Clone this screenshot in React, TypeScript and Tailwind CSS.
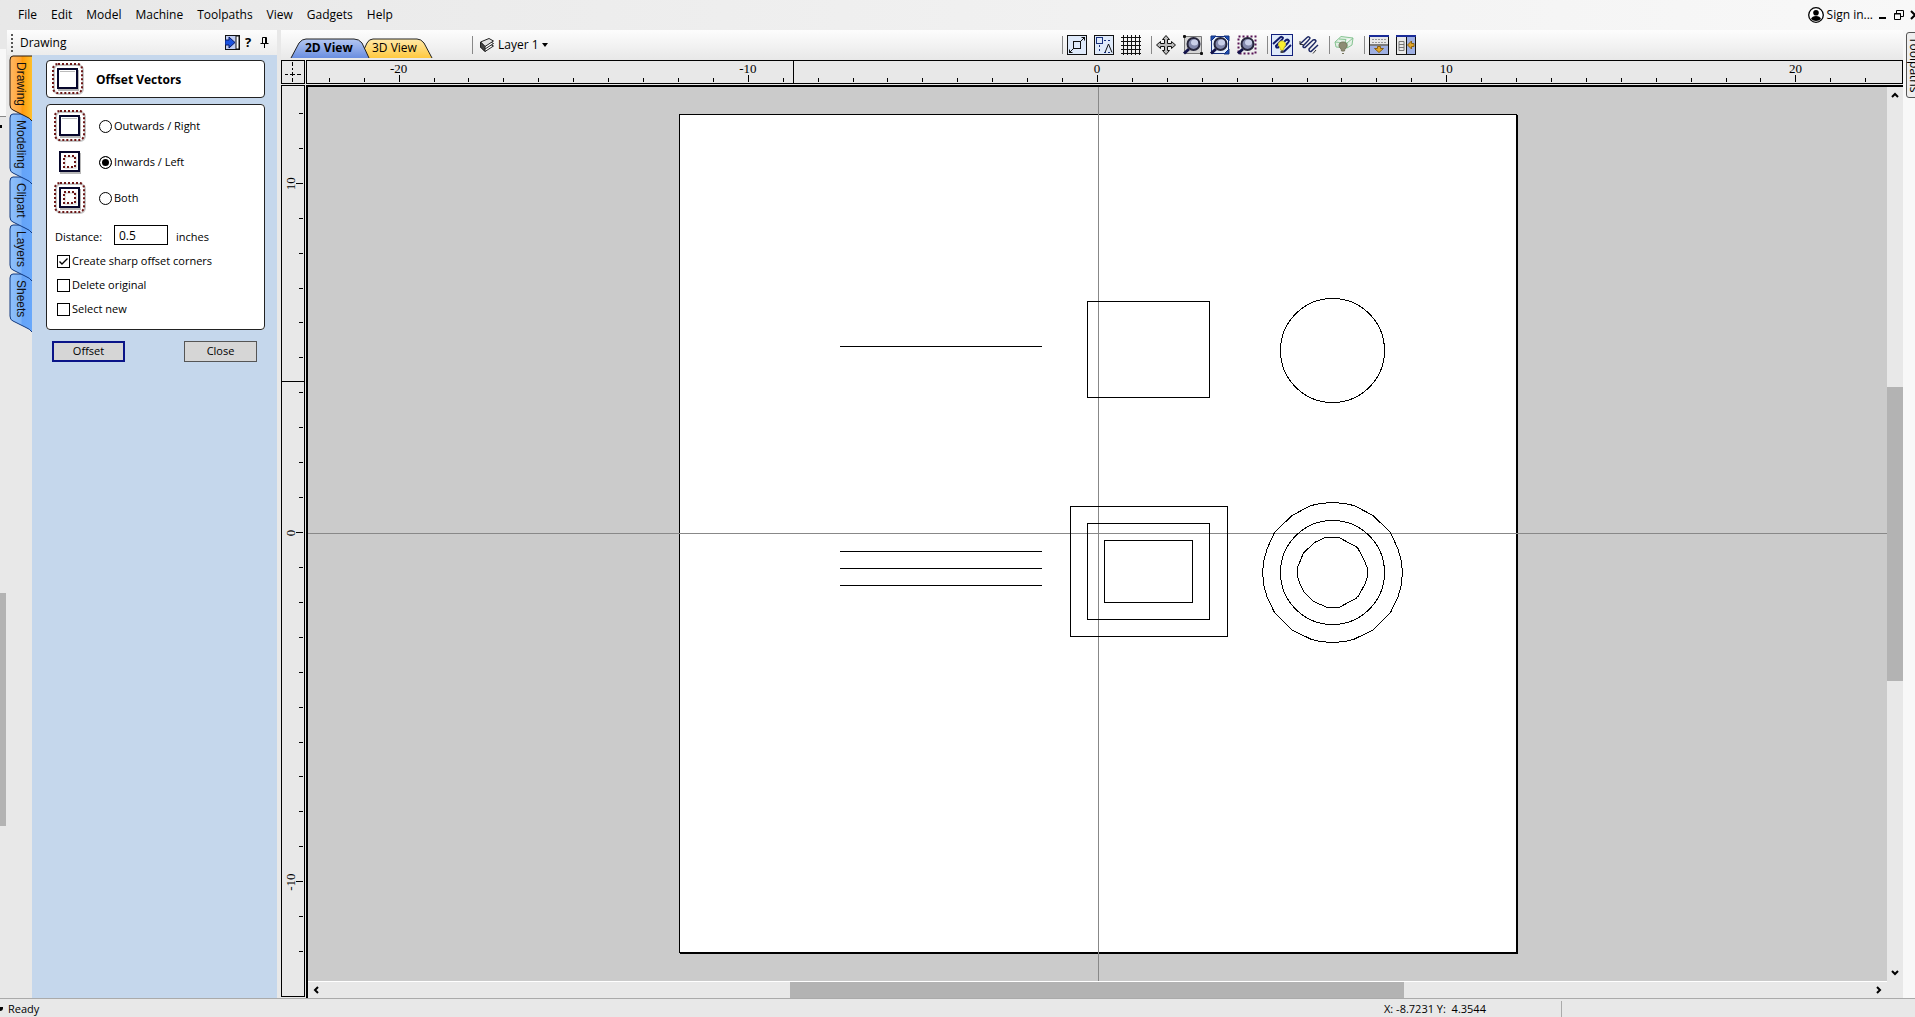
import type { ReactNode } from "react";

const menus = ["File", "Edit", "Model", "Machine", "Toolpaths", "View", "Gadgets", "Help"];

const sideTabs = [
  { label: "Drawing", y: 1, h: 57, active: true },
  { label: "Modeling", y: 59, h: 62, active: false },
  { label: "Clipart", y: 122, h: 48, active: false },
  { label: "Layers", y: 170, h: 48, active: false },
  { label: "Sheets", y: 219, h: 50, active: false },
];

const UNIT = 34.92;

const OffsetIcon = ({ outer, inner }: { outer?: boolean; inner?: boolean }) => (
  <svg width="32" height="32" viewBox="0 0 32 32" fill="none">
    {outer && (
      <>
        <rect x="2" y="2" width="29" height="29" rx="5" stroke="#c8c8c8" strokeWidth="2" />
        <rect x="1" y="1" width="29" height="29" rx="5" stroke="#6b1515" strokeWidth="2" strokeDasharray="2 2" />
      </>
    )}
    <rect x="7" y="8" width="19" height="19" stroke="#b8b8b8" strokeWidth="2" />
    <rect x="6" y="6" width="19" height="19" fill="#fff" stroke="#07072c" strokeWidth="2" />
    {inner ? (
      <>
        <rect x="11" y="11" width="11" height="11" stroke="#ccc" strokeWidth="1" />
        <rect x="10" y="10" width="11" height="11" stroke="#6b1515" strokeWidth="2" strokeDasharray="2 2" />
      </>
    ) : (
      <path d="M8 8.500H23" stroke="#bbb" />
    )}
  </svg>
);

const SideTabs = () => (
  <svg width="23" height="282" viewBox="0 0 23 282" className="block">
    <defs>
      <linearGradient id="orange">
        <stop offset="0" stopColor="#ffb764" />
        <stop offset="0.5" stopColor="#ffa431" />
        <stop offset="0.55" stopColor="#ff9a0c" />
        <stop offset="1" stopColor="#ffc02b" />
      </linearGradient>
      <linearGradient id="sky">
        <stop offset="0" stopColor="#8fc0fb" />
        <stop offset="0.5" stopColor="#7db3f8" />
        <stop offset="0.55" stopColor="#64a3f8" />
        <stop offset="1" stopColor="#68a8fb" />
      </linearGradient>
    </defs>
    {[...sideTabs].reverse().map((t) => {
      const b = t.y + t.h;
      return (
        <g key={t.label}>
          <path
            d={`M23 ${t.y}H4Q1 ${t.y} 1 ${t.y + 4}V${b - 8}Q1 ${b - 4} 4 ${b - 3}L16 ${b + 3}Q21 ${b + 5} 23 ${b + 8}`}
            fill={t.active ? "url(#orange)" : "url(#sky)"}
            stroke={t.active ? "#2a1a10" : "#12397f"}
          />
          <text
            transform={`translate(8 ${t.y + 6}) rotate(90)`}
            className="fill-[#111] font-['Liberation_Sans'] text-[12px]"
          >
            {t.label}
          </text>
        </g>
      );
    })}
  </svg>
);

const Option = ({ label, icon, checked }: { label: string; icon: ReactNode; checked?: boolean }) => (
  <label className="flex h-9 items-center">
    <span className="w-[45px]">{icon}</span>
    <input
      type="radio"
      name="direction"
      defaultChecked={checked}
      className="mr-0.5 size-[13px] appearance-none rounded-full border border-black bg-white checked:bg-black checked:shadow-[inset_0_0_0_2px_#fff]"
    />
    {label}
  </label>
);

const Check = ({ label, checked }: { label: string; checked?: boolean }) => (
  <label className="flex h-6 items-center">
    <span className="relative mr-0.5 size-[13px]">
      <input
        type="checkbox"
        defaultChecked={checked}
        className="peer block size-[13px] appearance-none border border-black bg-white"
      />
      <svg
        viewBox="0 0 13 13"
        className="pointer-events-none absolute inset-0 hidden size-[13px] peer-checked:block"
        fill="none"
        stroke="#000"
        strokeWidth="1.4"
      >
        <path d="M2.5 6.5L5 9L10.5 3.5" />
      </svg>
    </span>
    {label}
  </label>
);

const DrawingPanel = () => (
  <aside className="flex w-[270px] shrink-0 flex-col">
    <div className="flex h-[25px] items-center bg-gradient-to-b from-[#fdfdfd] to-[#ececec] pr-2 pl-1 text-[12px]">
      <span className="mr-[7px] h-[18px] border-l-2 border-dotted border-[#555]" />
      <h2 className="flex-1">Drawing</h2>
      <button aria-label="Switch side">
        <svg width="15" height="15" viewBox="0 0 15 15">
          <rect x="0.5" y="0.5" width="14" height="14" fill="#c0cdf2" stroke="#111" />
          <path d="M11 1H14V14H11Z" fill="#fff" stroke="#111" />
          <path d="M0 5H4V2L10 7.500L4 13V10H0Z" fill="#1c53e0" stroke="#081a66" />
        </svg>
      </button>
      <button aria-label="Help" className="w-4 text-[13px] font-bold">
        ?
      </button>
      <button aria-label="Pin" className="ml-1">
        <svg width="9" height="11" viewBox="0 0 9 11" fill="none" stroke="#000">
          <path d="M2.500 6V0.500H6.500V6M5.500 1V6M0.500 6.500H8.500M4.500 7V11" />
        </svg>
      </button>
    </div>
    <div className="flex flex-1">
      <div className="w-[25px] pl-[2px]">
        <SideTabs />
      </div>
      <form className="flex-1 bg-[#c5d7ec] pt-[5px] pr-3 pl-[14px] text-[11px]">
        <div className="flex h-[38px] items-center rounded-[4px] border border-[#222] bg-white pl-[5px]">
          <OffsetIcon outer />
          <h1 className="ml-3 pt-0.5 text-[12px] font-bold">Offset Vectors</h1>
        </div>
        <fieldset className="mt-1.5 h-[226px] rounded-[4px] border border-[#222] bg-white pt-[3px] pl-[7px]">
          <Option label="Outwards / Right" icon={<OffsetIcon outer />} />
          <Option label="Inwards / Left" icon={<OffsetIcon inner />} checked />
          <Option label="Both" icon={<OffsetIcon outer inner />} />
          <div className="mt-[9px] flex h-6 items-start pl-px">
            <label htmlFor="distance" className="w-[59px] pt-1">
              Distance:
            </label>
            <input
              id="distance"
              defaultValue="0.5"
              className="mr-2 h-5 w-[54px] border border-black bg-white px-1 text-[12px]"
            />
            <span className="pt-1">inches</span>
          </div>
          <div className="pl-[3px]">
            <Check label="Create sharp offset corners" checked />
            <Check label="Delete original" />
            <Check label="Select new" />
          </div>
        </fieldset>
        <div className="mt-[11px] flex justify-between pr-2 pl-1.5">
          <button type="button" className="h-[21px] w-[73px] border-2 border-[#0a1488] bg-[#d6d6d6]">
            Offset
          </button>
          <button type="button" className="h-[21px] w-[73px] border border-[#555] bg-[#d6d6d6]">
            Close
          </button>
        </div>
      </form>
    </div>
  </aside>
);

const Divider = () => <span className="mr-[3px] ml-1 h-[18px] border-l border-[#888]" />;

const Tool = ({ label, boxed, children }: { label: string; boxed?: boolean; children: ReactNode }) => (
  <button
    aria-label={label}
    className={`mr-[5px] flex size-[22px] items-center justify-center ${boxed ? "border border-[#12207c] bg-[#dfeafa]" : ""}`}
  >
    <svg width="20" height="20" viewBox="0 0 20 20" fill="none" stroke="#111" className="shrink-0">
      {children}
    </svg>
  </button>
);

const Lens = () => (
  <>
    <path d="M1 18.500L6 14" stroke="#12124a" strokeWidth="3" />
    <circle cx="10.500" cy="9" r="6" fill="#8288ab" stroke="#26263c" strokeWidth="2" />
    <ellipse cx="11.500" cy="7.500" rx="3.500" ry="3" fill="#c9cfe8" stroke="none" />
  </>
);

const squiggle =
  "M1 9L8 2.500Q10 1 11 3Q11 4 4 11Q4 13 6 12.500L14 5Q16 4 17 6Q17 7 10 14Q10 17 12 16.500L19 10";

const Toolbar = () => (
  <div className="flex items-center">
    <Divider />
    <Tool label="Snap to geometry">
      <rect x="0.500" y="0.500" width="19" height="19" fill="#dfeafa" />
      <rect x="6.500" y="6.500" width="7" height="7" />
      <path d="M2 18L6 14M14 6L18 2M2.500 14.500V17.500H5.500M14.500 2.500H17.500V5.500" />
    </Tool>
    <Tool label="Smart snapping">
      <rect x="0.500" y="0.500" width="19" height="19" fill="#dfeafa" />
      <rect x="2.500" y="2.500" width="6" height="6" stroke="#17307c" />
      <path d="M14.500 9L11 17.500M14.500 9L18 17.500" />
      <path d="M5.500 10V18M10 5.500H18M10 17.500H18" stroke="#17307c" strokeDasharray="2 2" />
    </Tool>
    <Tool label="Snap to grid">
      <path d="M2.500 0V20M6.500 0V20M10.500 0V20M14.500 0V20M18.500 0V20M0 2.500H20M0 6.500H20M0 10.500H20M0 14.500H20M0 18.500H20" />
    </Tool>
    <Divider />
    <Tool label="Pan">
      <path
        d="M10 0.500L13.500 4.500H11.500V8.500H15.500V6.500L19.500 10L15.500 13.500V11.500H11.500V15.500H13.500L10 19.500L6.500 15.500H8.500V11.500H4.500V13.500L0.500 10L4.500 6.500V8.500H8.500V4.500H6.500Z"
        fill="#bbb"
      />
    </Tool>
    <Tool label="Zoom to box">
      <path d="M1.500 1.500H18.500V18.500H1.500Z" fill="#d4d4d4" stroke="#777" />
      <path d="M0 1.500H3M1.500 0V3M17 18.500H20M18.500 17V20" strokeWidth="2" />
      <Lens />
    </Tool>
    <Tool label="Zoom extents">
      <rect x="1.500" y="1.500" width="17" height="17" fill="#e4eefc" stroke="#17307c" />
      <path d="M1 1H6L1 6ZM14 1H19V6ZM19 14V19H14Z" fill="#1d4fb5" stroke="#12307c" />
      <Lens />
    </Tool>
    <Tool label="Zoom selected">
      <rect x="1.500" y="1.500" width="17" height="17" stroke="#591556" strokeWidth="2" strokeDasharray="2 2" />
      <Lens />
    </Tool>
    <Divider />
    <Tool label="Show toolpaths" boxed>
      <path d={squiggle} stroke="#101a6b" strokeWidth="2" />
      <path
        d="M10 6C12 6 13.500 7.500 13.500 9.500C13.500 11.500 11.500 12 11.500 15H8.500C8.500 12 6.500 11.500 6.500 9.500C6.500 7.500 8 6 10 6Z"
        fill="#f9ee30"
        stroke="#d8cc2a"
      />
      <path d="M8.500 17H11.500" stroke="#444" strokeWidth="2" />
    </Tool>
    <Tool label="Show solid vectors">
      <path d={squiggle} stroke="#1d2864" strokeWidth="1.500" />
      <path d="M1 6V9.500H4.500M14 18.500L17 15" stroke="#333" />
    </Tool>
    <Divider />
    <Tool label="Shading">
      <path
        d="M1 7L7 1.500L19 3L18 10L13 13L2 12ZM1 7L13 8L19 3M13 8V13M5 4L12 4.500L10 11"
        fill="#e3f0e5"
        stroke="#86c492"
      />
      <path
        d="M9 7C11.500 7 13 8.500 13 10.500C13 13 10.500 13 10.500 16H7.500C7.500 13 5 13 5 10.500C5 8.500 6.500 7 9 7ZM8 18.500H10"
        fill="#8d8c74"
        stroke="#77775f"
      />
    </Tool>
    <Divider />
    <Tool label="Dock bottom">
      <rect x="0.500" y="0.500" width="19" height="19" fill="#e9e9e9" />
      <path d="M0 1H20" stroke="#1a2b98" strokeWidth="2" />
      <path d="M3 4.500H18M3 7.500H18" stroke="#999" strokeDasharray="2 1" />
      <path d="M0 10H20" />
      <rect x="1" y="11" width="18" height="8" fill="#9eafe2" stroke="none" />
      <path d="M8.500 11.500H11.500V13.500H14.500L10 17.500L5.500 13.500H8.500Z" fill="#e2a526" stroke="#8a6112" />
    </Tool>
    <Tool label="Dock right">
      <rect x="0.500" y="0.500" width="19" height="19" fill="#e9e9e9" />
      <path d="M0 1H20" stroke="#1a2b98" strokeWidth="2" />
      <path d="M3 6.500H8V15.500H3ZM3 9.500H8M3 12.500H8" stroke="#777" />
      <rect x="11" y="2" width="8" height="17" fill="#9eafe2" stroke="none" />
      <path d="M10.500 2V19" />
      <path d="M18 8.500H15.500V6L11.500 10L15.500 14V11.500H18Z" fill="#e2a526" stroke="#8a6112" />
    </Tool>
  </div>
);

const ViewBar = () => (
  <div className="flex h-[30px] items-center bg-gradient-to-b from-[#fdfdfd] to-[#e8e8e8] text-[12px]">
    <svg width="146" height="20" viewBox="0 0 146 20" className="mt-1.5 ml-[9px] shrink-0">
      <defs>
        <linearGradient id="tabBlue" x2="0" y2="1">
          <stop offset="0" stopColor="#b5c8f2" />
          <stop offset="1" stopColor="#6a8ee0" />
        </linearGradient>
        <linearGradient id="tabGold" x2="0" y2="1">
          <stop offset="0" stopColor="#ffe9a8" />
          <stop offset="1" stopColor="#ffc93f" />
        </linearGradient>
      </defs>
      <path d="M70 20L77 5Q79 1 83 1H127Q131 1 134 5L142 20" fill="url(#tabGold)" stroke="#222" />
      <path d="M1 20L9 5Q12 1 16 1H64Q69 1 72 5L79 20" fill="url(#tabBlue)" stroke="#222" />
      <text x="15" y="14" className="font-['Open_Sans'] text-[12px] font-bold">
        2D View
      </text>
      <text x="82" y="14" className="font-['Open_Sans'] text-[12px]">
        3D View
      </text>
    </svg>
    <span className="mr-1.5 ml-9 h-[18px] border-l border-[#888]" />
    <div className="w-[579px]">
      <button className="flex items-center gap-[3px]">
        <svg width="16" height="16" viewBox="0 0 16 16" stroke="#222" strokeLinejoin="round">
          <path d="M1.500 10L10 6.500L14.500 9L6 14.500Z" fill="#fff" />
          <path d="M1.500 7.500L10 4L14.500 6.500L6 12Z" fill="#fff" />
          <path d="M1.500 5L10 1.500L14.500 4L6 9.500Z" fill="#e4e4e4" />
          <path d="M1.500 5L6 9.500V14.500L1.500 10Z" fill="#444" />
        </svg>
        Layer 1
        <svg width="6" height="4" viewBox="0 0 6 4">
          <path d="M0 0H6L3 4Z" />
        </svg>
      </button>
    </div>
    <Toolbar />
  </div>
);

const TopRuler = () => (
  <svg
    viewBox="307 61 1595 22"
    preserveAspectRatio="xMidYMid slice"
    className="block h-6 min-w-0 flex-1 border border-black bg-[#e8e8e8]"
  >
    {Array.from({ length: 45 }, (_, i) => i - 22).map((n) => (
      <path key={n} d={`M${Math.round(1097 + n * UNIT) + 0.5} ${n % 10 ? 78 : 75}V82`} stroke="#000" />
    ))}
    {[-20, -10, 0, 10, 20].map((n) => (
      <text key={n} x={1097 + n * UNIT} y="73" textAnchor="middle" className="font-['Liberation_Serif'] text-[13px]">
        {n}
      </text>
    ))}
    <path d="M793.5 61V83" stroke="#000" />
  </svg>
);

const SideRuler = () => (
  <svg
    viewBox="282 86 22 910"
    preserveAspectRatio="xMidYMid slice"
    className="block min-h-0 w-6 flex-1 border border-black bg-[#e8e8e8]"
  >
    {Array.from({ length: 25 }, (_, i) => i - 12).map((n) => (
      <path key={n} d={`M${n % 10 ? 299 : 296} ${Math.round(532 - n * UNIT) + 0.5}H303`} stroke="#000" />
    ))}
    {[10, 0, -10].map((n) => (
      <text
        key={n}
        transform={`translate(295 ${533 - n * UNIT}) rotate(-90)`}
        textAnchor="middle"
        className="font-['Liberation_Serif'] text-[13px]"
      >
        {n}
      </text>
    ))}
    <path d="M282 381.5H304" stroke="#000" />
  </svg>
);

const Canvas = () => (
  <svg
    viewBox="308 87 1579 894"
    preserveAspectRatio="xMidYMid slice"
    className="block size-full bg-[#cbcbcb]"
    fill="none"
    stroke="#000"
    shapeRendering="crispEdges"
  >
    <rect x="679.500" y="114.500" width="837" height="838" fill="#fff" />
    <path d="M680 953.500H1517.500V115" />
    <path d="M1098.500 87V981M308 533.500H1887" stroke="#888" />
    {/* originals */}
    <path d="M840 346.500H1042" />
    <rect x="1087.500" y="301.500" width="122" height="96" />
    <circle cx="1332.500" cy="350.500" r="52" />
    {/* offsets */}
    <path d="M840 551.500H1042M840 568.500H1042M840 585.500H1042" />
    <rect x="1070.500" y="506.500" width="157" height="130" />
    <rect x="1087.500" y="523.500" width="122" height="96" />
    <rect x="1104.500" y="540.500" width="88" height="62" />
    <path d="M1332.500 502.500L1345 503.500L1354.500 505.700L1373 515.500L1390.500 532.500L1398 549L1401 560L1402.500 572.500L1401 586L1398 597L1390.500 612.500L1373 630L1354.500 639L1345 641.500L1332.500 642.500L1320 641.500L1310.500 639L1292 630L1274.500 612.500L1267 597L1264 586L1262.500 572.500L1264 560L1267 549L1274.500 532.500L1292 515.500L1310.500 505.700L1320 503.500Z" />
    <circle cx="1332.500" cy="572.500" r="52" />
    <path d="M1331.500 537.500H1339L1357.500 547.500L1365 562L1367.500 568.500V577L1365 584L1357.500 597.500L1339 607.500H1327.500L1313.500 601.500L1303.500 591.500L1299.500 582.500L1297.500 577V567.500L1303.500 553L1314.500 542.500L1325 537.500Z" />
  </svg>
);

const Arrow = ({ d, label }: { d: string; label: string }) => (
  <button aria-label={label} className="flex size-4 shrink-0 items-center justify-center">
    <svg width="8" height="8" viewBox="0 0 8 8" fill="none" stroke="#000" strokeWidth="2">
      <path d={d} />
    </svg>
  </button>
);

const Workspace = () => (
  <main className="flex min-w-0 flex-1 flex-col">
    <ViewBar />
    <div className="flex flex-1">
      <div className="flex w-[25px] flex-col pr-px pb-px">
        <svg width="24" height="24" viewBox="0 0 24 24" fill="none" stroke="#000">
          <rect x="0.500" y="0.500" width="23" height="23" fill="#e8e8e8" />
          <path d="M11.500 2V6M11.500 8V10M11.500 12V16M11.500 18V22M4 14.500H7M9 14.500H14M16 14.500H20" />
        </svg>
        <div className="mt-px flex flex-1 flex-col">
          <SideRuler />
        </div>
      </div>
      <div className="flex min-w-0 flex-1 flex-col">
        <div className="flex">
          <TopRuler />
        </div>
        <div className="mt-px grid flex-1 grid-cols-[1fr_16px] grid-rows-[1fr_17px] border-t-2 border-l-2 border-black">
          <div className="relative">
            <div className="absolute inset-0">
              <Canvas />
            </div>
          </div>
          <div className="flex flex-col bg-[#e8e8e8]">
            <Arrow label="Scroll up" d="M1 6L4 3L7 6" />
            <div className="grow-[284]" />
            <div className="grow-[294] bg-[#b3b3b3]" />
            <div className="grow-[284]" />
            <Arrow label="Scroll down" d="M1 2L4 5L7 2" />
          </div>
          <div className="flex items-center border-t border-white bg-[#e8e8e8]">
            <Arrow label="Scroll left" d="M6 1L3 4L6 7" />
            <div className="grow-[466]" />
            <div className="h-4 grow-[614] bg-[#b3b3b3]" />
            <div className="grow-[467]" />
            <Arrow label="Scroll right" d="M2 1L5 4L2 7" />
          </div>
          <div className="bg-[#e8e8e8]" />
        </div>
      </div>
    </div>
  </main>
);

const App = () => {
  return (
    <div className="flex min-h-screen flex-col overflow-hidden bg-[#e8e8e8] font-['Open_Sans',sans-serif] text-[12px] text-black">
      {/* Menu bar */}
      <header className="flex h-[30px] items-center bg-gradient-to-r from-[#e8e8e8] to-[#f8f8f8]">
        <nav className="flex flex-1 gap-[14px] pl-[18px]">
          {menus.map((m) => (
            <button key={m}>{m}</button>
          ))}
        </nav>
        <button className="mr-1.5 flex items-center gap-[3px]">
          <svg width="16" height="16" viewBox="0 0 16 16">
            <circle cx="8" cy="8" r="7.300" fill="#fff" stroke="#000" strokeWidth="1.300" />
            <circle cx="8" cy="5.800" r="2.800" />
            <path d="M3 12Q4 9 8 9T13 12Q11 14 8 14T3 12Z" />
          </svg>
          Sign in...
        </button>
        <svg width="36" height="12" viewBox="0 0 36 12" fill="none" stroke="#000" className="shrink-0">
          <path d="M0 9H7" strokeWidth="2" />
          <path d="M17.500 4V1.500H24.500V7.500H22M15.500 4.500H21.500V10.500H15.500ZM15 5H22" />
          <path d="M32 2L40 10M32 10L40 2" strokeWidth="2" />
        </svg>
      </header>
      <div className="flex flex-1">
        {/* Window edge on the left */}
        <div className="flex w-[7px] shrink-0 flex-col">
          <div className="mt-[19px] h-[68px] w-1.5 border-b border-[#888] bg-[#f8f8f8]" />
          <span className="mt-2 h-[3px] w-[2px] bg-black" />
          <div className="grow-[466]" />
          <div className="w-1.5 grow-[233] bg-[#b3b3b3]" />
          <div className="grow-[172]" />
        </div>
        <DrawingPanel />
        <div className="flex min-w-0 flex-1 pl-1">
          <Workspace />
        </div>
        <div className="w-3 shrink-0 overflow-hidden bg-[#f8f8f8]">
          <button className="mt-0.5 ml-[3px] flex h-[66px] w-4 items-center justify-center rounded-[3px] border border-[#555] bg-[#eee] text-[12px] leading-[14px] [writing-mode:vertical-rl]">
            Toolpaths
          </button>
        </div>
      </div>
      {/* Status bar */}
      <footer className="flex h-[19px] items-center border-t border-[#aaa] pt-0.5 text-[11px]">
        <span className="mr-[5px] h-1 w-[3px] rounded-br bg-black" />
        <span className="flex-1">Ready</span>
        <span className="w-[177px] whitespace-pre">X: -8.7231 Y:  4.3544</span>
        <span className="h-4 w-[354px] border-l border-[#aaa]" />
      </footer>
    </div>
  );
};

export default App;
